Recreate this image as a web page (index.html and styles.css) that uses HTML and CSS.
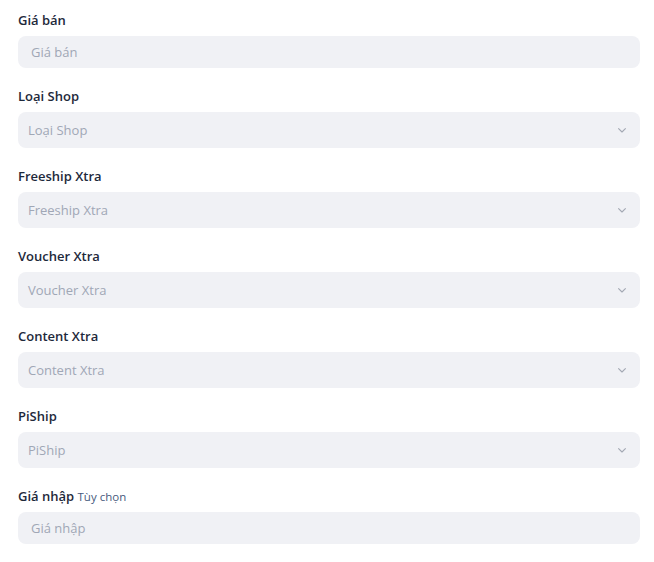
FILE: index.html
```html
<!DOCTYPE html>
<html lang="vi">
<head>
<meta charset="utf-8">
<link rel="stylesheet" href="styles.css">
</head>
<body>
<form class="form">
  <div class="group">
    <label class="label">Giá bán</label>
    <input class="input" type="text" placeholder="Giá bán">
  </div>
  <div class="group">
    <label class="label">Loại Shop</label>
    <div class="select"><span>Loại Shop</span><svg class="chev" viewBox="0 0 8 5" width="8" height="5"><path d="M0.6 0.6l3.4 3.4 3.4-3.4" fill="none" stroke="currentColor" stroke-width="1.1" stroke-linecap="round" stroke-linejoin="round"/></svg></div>
  </div>
  <div class="group">
    <label class="label">Freeship Xtra</label>
    <div class="select"><span>Freeship Xtra</span><svg class="chev" viewBox="0 0 8 5" width="8" height="5"><path d="M0.6 0.6l3.4 3.4 3.4-3.4" fill="none" stroke="currentColor" stroke-width="1.1" stroke-linecap="round" stroke-linejoin="round"/></svg></div>
  </div>
  <div class="group">
    <label class="label">Voucher Xtra</label>
    <div class="select"><span>Voucher Xtra</span><svg class="chev" viewBox="0 0 8 5" width="8" height="5"><path d="M0.6 0.6l3.4 3.4 3.4-3.4" fill="none" stroke="currentColor" stroke-width="1.1" stroke-linecap="round" stroke-linejoin="round"/></svg></div>
  </div>
  <div class="group">
    <label class="label">Content Xtra</label>
    <div class="select"><span>Content Xtra</span><svg class="chev" viewBox="0 0 8 5" width="8" height="5"><path d="M0.6 0.6l3.4 3.4 3.4-3.4" fill="none" stroke="currentColor" stroke-width="1.1" stroke-linecap="round" stroke-linejoin="round"/></svg></div>
  </div>
  <div class="group">
    <label class="label">PiShip</label>
    <div class="select"><span>PiShip</span><svg class="chev" viewBox="0 0 8 5" width="8" height="5"><path d="M0.6 0.6l3.4 3.4 3.4-3.4" fill="none" stroke="currentColor" stroke-width="1.1" stroke-linecap="round" stroke-linejoin="round"/></svg></div>
  </div>
  <div class="group">
    <label class="label">Giá nhập <span class="opt">Tùy chọn</span></label>
    <input class="input" type="text" placeholder="Giá nhập">
  </div>
</form>
</body>
</html>
```
FILE: styles.css
```css
* { box-sizing: border-box; }
html, body { margin: 0; background: #fff; }
body {
  font-family: "Open Sans", "Noto Sans", sans-serif;
  color: #1e293b;
  padding: 10px 14px 0 18px;
}
.form { display: flex; flex-direction: column; gap: 18px; }
.group { display: flex; flex-direction: column; gap: 6px; }
.label {
  font-size: 13px;
  font-weight: 600;
  line-height: 20px;
  height: 20px;
  color: #1e293b;
}
.opt {
  font-size: 11.5px;
  font-weight: 400;
  color: #475a7d;
}
.input {
  display: block;
  width: 100%;
  height: 32px;
  border: none;
  outline: none;
  border-radius: 8px;
  background: #f0f1f5;
  padding: 0 13px;
  font-family: inherit;
  font-size: 13px;
  color: #1e293b;
}
.input::placeholder { color: #a0a7b6; }
.select {
  height: 36px;
  border-radius: 8px;
  background: #f0f1f5;
  padding: 0 14px 0 10px;
  display: flex;
  align-items: center;
  justify-content: space-between;
  font-size: 13px;
  color: #a0a7b6;
}
.chev { color: #a3a8b3; }
```
